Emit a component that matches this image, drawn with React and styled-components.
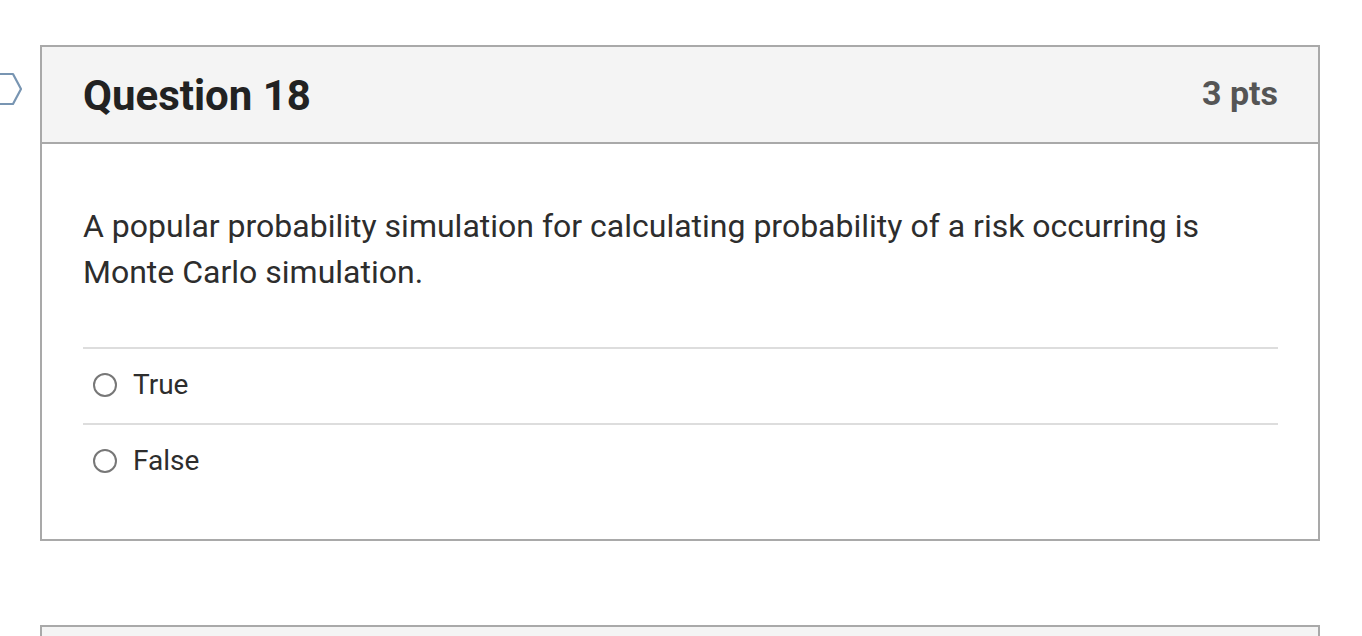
import React from 'react';
import styled, { createGlobalStyle } from 'styled-components';

const GlobalStyle = createGlobalStyle`
  html, body {
    margin: 0;
    padding: 0;
    background: #ffffff;
    font-family: Roboto, "Liberation Sans", sans-serif;
    color: #2d2d2d;
  }
`;

const answers = ['True', 'False'];

const App = () => (
  <>
    <GlobalStyle />
    <Page>
      <QuestionRow>
        <Gutter>
          <FlagIcon width="40" height="60" viewBox="0 0 40 60">
            <path
              d="M-10 14 H13 L21 29 L13 44 H-10"
              fill="none"
              stroke="#7895b2"
              strokeWidth="2.2"
              strokeLinejoin="round"
            />
          </FlagIcon>
        </Gutter>
        <Card>
          <Header>
            <Title>Question 18</Title>
            <Points>3 pts</Points>
          </Header>
          <Body>
            <Prompt>
              A popular probability simulation for calculating probability of a risk occurring is
              Monte Carlo simulation.
            </Prompt>
            <AnswerList>
              {answers.map((a) => (
                <Answer key={a}>
                  <Radio />
                  <AnswerLabel>{a}</AnswerLabel>
                </Answer>
              ))}
            </AnswerList>
          </Body>
        </Card>
      </QuestionRow>
      <QuestionRow>
        <Gutter />
        <Card>
          <Header />
        </Card>
      </QuestionRow>
    </Page>
  </>
);

const Page = styled.div`
  display: flex;
  flex-direction: column;
  gap: 84px;
  padding-top: 45px;
  height: 636px;
  box-sizing: border-box;
  overflow: hidden;
`;

const QuestionRow = styled.div`
  display: flex;
  align-items: flex-start;
`;

const Gutter = styled.div`
  width: 40px;
  flex-shrink: 0;
  padding-top: 15px;
`;

const FlagIcon = styled.svg`
  display: block;
`;

const Card = styled.div`
  width: 1280px;
  border: 2px solid #a9a9a9;
  box-sizing: border-box;
  background: #fff;
`;

const Header = styled.div`
  display: flex;
  justify-content: space-between;
  align-items: center;
  height: 97px;
  padding: 0 40px 0 41px;
  background: #f4f4f4;
  border-bottom: 2px solid #a9a9a9;
  box-sizing: border-box;
`;

const Title = styled.h2`
  margin: 0;
  font-size: 42px;
  font-weight: 700;
  color: #222;
  padding-top: 2px;
`;

const Points = styled.div`
  font-size: 34px;
  font-weight: 700;
  color: #555;
  padding-bottom: 4px;
`;

const Body = styled.div`
  padding: 59px 40px 40px 41px;
`;

const Prompt = styled.p`
  margin: 0;
  font-size: 32px;
  line-height: 46px;
  color: #2d2d2d;
`;

const AnswerList = styled.div`
  margin-top: 52px;
  border-top: 2px solid #dddddd;
`;

const Answer = styled.div`
  display: flex;
  align-items: center;
  gap: 16px;
  height: 74px;
  padding: 0 0 4px 10px;
  box-sizing: border-box;
  & + & {
    border-top: 2px solid #dddddd;
    height: 76px;
  }
`;

const Radio = styled.span`
  width: 24px;
  height: 24px;
  border: 2px solid #777;
  border-radius: 50%;
  box-sizing: border-box;
  flex-shrink: 0;
  margin-top: 2px;
`;

const AnswerLabel = styled.span`
  font-size: 28px;
  color: #2d2d2d;
`;

export default App;
